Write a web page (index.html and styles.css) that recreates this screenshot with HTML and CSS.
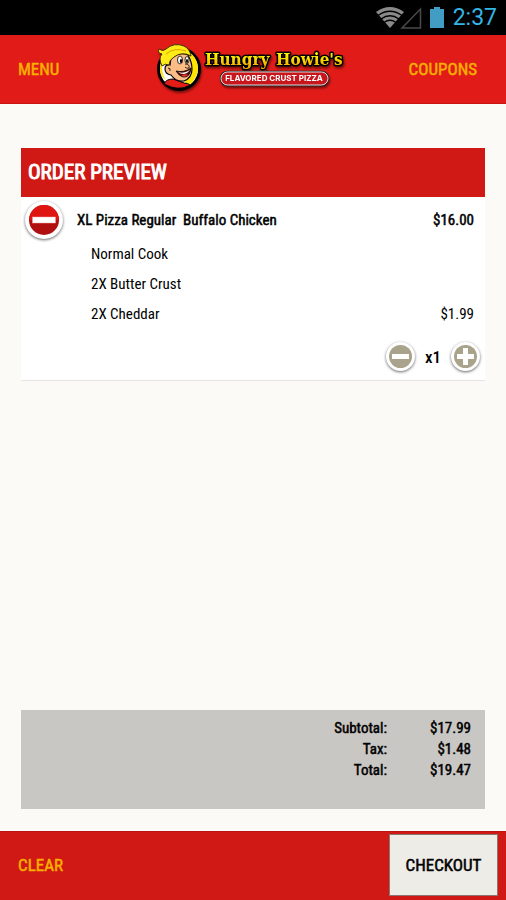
FILE: index.html
```html
<!DOCTYPE html>
<html lang="en">
<head>
    <meta charset="UTF-8">
    <meta name="viewport" content="width=device-width, initial-scale=1.0">
    <title>Order Preview</title>
    <link rel="stylesheet" href="styles.css">
</head>
<body>
    <div class="status-bar">
        <svg class="status-icons" width="72" height="24" viewBox="0 0 72 24">
            <!-- wifi -->
            <path d="M15 22 L1 6 Q15 -4 29 6 Z" fill="#8a8a8a"/>
            <g fill="none" stroke="#000" stroke-width="1.3">
                <path d="M3 9.500 Q15 1 27 9.500"/>
                <path d="M6 13 Q15 6.500 24 13"/>
                <path d="M9 16.500 Q15 12 21 16.500"/>
            </g>
            <!-- signal -->
            <path d="M27 22 L45.500 3 V22 Z" fill="none" stroke="#4a4a4a" stroke-width="1.500"/>
            <!-- battery -->
            <path d="M55 3 H59 V1 H65 V3 H69 V22 H55 Z" fill="#429dc4"/>
        </svg>
        <span class="clock">2:37</span>
    </div>

    <header class="header">
        <a href="#" class="nav-link">MENU</a>
        <svg class="logo" width="200" height="56" viewBox="-6 0 200 56" role="img" aria-label="Hungry Howie's Flavored Crust Pizza">
            <defs>
                <linearGradient id="gold" x1="0" y1="0" x2="0" y2="1">
                    <stop offset="0.3" stop-color="#fff200"/>
                    <stop offset="0.9" stop-color="#f7a800"/>
                </linearGradient>
                <filter id="shadow" x="-10%" y="-10%" width="130%" height="140%">
                    <feDropShadow dx="1" dy="2" stdDeviation="1" flood-opacity="0.5"/>
                </filter>
            </defs>
            <g filter="url(#shadow)">
                <circle cx="25" cy="28" r="20.500" fill="#fff" stroke="#000" stroke-width="3"/>
                <path d="M33 10 A19 19 0 0 1 34 44 Q43 27 33 10 Z" fill="#ffe600"/>
                <path d="M31 40 Q40 35 39 20 Q46 28 39 40 Q36 44 32 45 Z" fill="#ffe600"/>
                <path d="M12 13 Q4 27 12 39 Q6 35 6 28 Q6 19 12 13 Z" fill="#ffe600"/>
                <!-- shirt -->
                <path d="M10 43 Q12 38 19 38 L30 42 Q34 42 36 44 Q25 51 10 43 Z" fill="#e31b17" stroke="#000" stroke-width="1"/>
                <!-- face -->
                <path d="M17 17 Q26 10 34 14 Q38 21 38 28 Q38 37 30 40 Q22 41 17 34 Q11 33 11 28 Q11 23 16 24 Z" fill="#fbbd85" stroke="#000" stroke-width="1.200"/>
                <path d="M14 27 Q17 27 16 30" fill="none" stroke="#000" stroke-width="0.800"/>
                <!-- hair -->
                <path d="M8 25 Q4 17 8 13 Q3 12 5 8 Q9 11 12 8 Q20 1 30 5 Q36 8 37 15 Q28 10 20 16 Q15 19 15 24 Q11 22 8 25 Z" fill="#ffec19" stroke="#3b3000" stroke-width="1"/>
                <path d="M12 13 Q20 6 32 10" fill="none" stroke="#d6a400" stroke-width="1"/>
                <!-- eyes, nose and mouth -->
                <ellipse cx="26" cy="19" rx="2.500" ry="4" fill="#fff" stroke="#000" stroke-width="0.800"/>
                <ellipse cx="33" cy="19" rx="2" ry="3.500" fill="#fff" stroke="#000" stroke-width="0.800"/>
                <ellipse cx="27" cy="20" rx="1.200" ry="2" fill="#000"/>
                <ellipse cx="33" cy="20" rx="1" ry="2" fill="#000"/>
                <path d="M31 23 Q36 23 35 27 Q33 28 31 26" fill="#fbbd85" stroke="#000" stroke-width="0.800"/>
                <path d="M22 30 Q30 32 37 27 Q36 37 29 36 Q25 35 22 30 Z" fill="#5c0b08" stroke="#000" stroke-width="0.800"/>
                <path d="M24 31 Q30 33 36 29 Q34 32 30 33 Q26 33 24 31 Z" fill="#fff"/>
                <path d="M27 35 Q30 32 34 34 Q31 37 27 35 Z" fill="#e2392f"/>
            </g>
            <g filter="url(#shadow)">
                <text class="logo-name" x="51" y="24">Hungry</text>
                <text class="logo-name" x="122" y="24">Howie's</text>
                <rect x="67" y="31" width="107" height="13" rx="6.500" fill="#c9161c" stroke="#222" stroke-width="2.500"/>
                <rect x="67" y="31" width="107" height="13" rx="6.500" fill="#c9161c" stroke="#ddd" stroke-width="1"/>
                <text class="logo-tag" x="120" y="40" text-anchor="middle">FLAVORED CRUST PIZZA</text>
            </g>
        </svg>
        <a href="#" class="nav-link">COUPONS</a>
    </header>

    <main class="content">
        <section class="order">
            <h1>ORDER PREVIEW</h1>
            <div class="item">
                <button class="round-btn remove" type="button" aria-label="Remove item">
                    <svg width="30" height="30" viewBox="0 0 30 30">
                        <circle cx="15" cy="15" r="15" fill="#b01010"/>
                        <path d="M0 15 A15 15 0 0 1 30 15 Z" fill="#df1512"/>
                        <rect x="3.500" y="12" width="23" height="6" fill="#fff" stroke="#e9a9a5" stroke-width="0.500"/>
                    </svg>
                </button>
                <div class="details">
                    <div class="row item-name">
                        <span>XL Pizza Regular&nbsp; Buffalo Chicken</span>
                        <span>$16.00</span>
                    </div>
                    <div class="row option"><span>Normal Cook</span></div>
                    <div class="row option"><span>2X Butter Crust</span></div>
                    <div class="row option">
                        <span>2X Cheddar</span>
                        <span>$1.99</span>
                    </div>
                </div>
            </div>
            <div class="quantity">
                <button class="round-btn" type="button" aria-label="Decrease quantity">
                    <svg width="23" height="23" viewBox="0 0 23 23">
                        <circle cx="11.500" cy="11.500" r="11.500" fill="#aaa38b"/>
                        <rect x="3" y="9" width="17" height="5" fill="#fff"/>
                    </svg>
                </button>
                <span class="count">x1</span>
                <button class="round-btn" type="button" aria-label="Increase quantity">
                    <svg width="23" height="23" viewBox="0 0 23 23">
                        <circle cx="11.500" cy="11.500" r="11.500" fill="#aaa38b"/>
                        <path d="M9 3 H14 V9 H20 V14 H14 V20 H9 V14 H3 V9 H9 Z" fill="#fff"/>
                    </svg>
                </button>
            </div>
        </section>

        <section class="totals">
            <table>
                <tr><th scope="row">Subtotal:</th><td>$17.99</td></tr>
                <tr><th scope="row">Tax:</th><td>$1.48</td></tr>
                <tr><th scope="row">Total:</th><td>$19.47</td></tr>
            </table>
        </section>
    </main>

    <footer class="footer">
        <button class="clear-btn" type="button">CLEAR</button>
        <button class="checkout-btn" type="button">CHECKOUT</button>
    </footer>
</body>
</html>
```
FILE: styles.css
```css
* {
    box-sizing: border-box;
}
body {
    font-family: "Roboto Condensed", "Liberation Sans Narrow", Roboto, sans-serif;
    font-size: 15px;
    color: #000;
    background-color: #fbfaf6;
    margin: 0;
    min-height: 100vh;
    display: flex;
    flex-direction: column;
}
button {
    font-family: inherit;
    color: inherit;
    border: none;
    padding: 0;
    cursor: pointer;
}
/* thickened regular weight, narrower than the real bold */
h1,
.nav-link,
.item-name,
.totals,
.footer button {
    -webkit-text-stroke: 0.5px currentColor;
}
.status-bar {
    background-color: #000;
    height: 35px;
    padding: 0 9px;
    display: flex;
    justify-content: flex-end;
    align-items: center;
    gap: 6px;
}
.clock {
    font-family: Roboto, sans-serif;
    font-size: 23px;
    line-height: 36px;
    color: #33b5e5;
}
.header {
    background-color: #e11b17;
    border-bottom: 1px solid #c81410;
    height: 69px;
    padding: 0 29px 0 18px;
    display: grid;
    grid-template-columns: 1fr auto 1fr;
    align-items: center;
}
.nav-link {
    color: #f8b000;
    font-size: 17px;
    text-decoration: none;
}
.nav-link:last-child {
    text-align: right;
}
.logo {
    display: block;
}
.logo-name {
    font-family: "DejaVu Serif Condensed", "DejaVu Serif", serif;
    font-size: 17px;
    font-weight: bold;
    fill: url(#gold);
    stroke: #000;
    stroke-width: 3px;
    stroke-linejoin: round;
    paint-order: stroke;
}
.logo-tag {
    font-family: Inter, "Open Sans", sans-serif;
    font-size: 8px;
    font-weight: bold;
    fill: #fff;
}
.content {
    flex: 1;
    padding: 44px 21px 22px;
    display: flex;
    flex-direction: column;
    justify-content: space-between;
}
.order {
    background-color: #fff;
    border-bottom: 1px solid #e4e4e0;
}
h1 {
    background-color: #d01814;
    color: #fff;
    font-size: 21px;
    font-weight: normal;
    line-height: 49px;
    margin: 0;
    padding: 0 7px;
    -webkit-text-stroke-width: 1px;
}
.item {
    display: flex;
    align-items: flex-start;
    gap: 14px;
    padding: 4px 11px 0 4px;
}
.round-btn {
    background-color: #fff;
    border-radius: 50%;
    box-shadow: 0 1px 3px rgba(0, 0, 0, 0.6);
    width: 29px;
    height: 29px;
    display: flex;
    justify-content: center;
    align-items: center;
}
.remove {
    width: 38px;
    height: 38px;
}
.details {
    flex: 1;
}
.row {
    display: flex;
    justify-content: space-between;
    line-height: 30px;
}
.item-name {
    line-height: 38px;
}
.option span:first-child {
    padding-left: 14px;
}
.quantity {
    display: flex;
    justify-content: flex-end;
    align-items: center;
    gap: 10px;
    padding: 13px 5px 9px;
}
.count {
    font-size: 17px;
    font-weight: 500;
}
.totals {
    background-color: #c9c7c3;
    padding: 8px 14px 28px;
}
.totals table {
    border-collapse: collapse;
    margin-left: auto;
    text-align: right;
}
.totals th,
.totals td {
    font-weight: normal;
    line-height: 21px;
    padding: 0;
}
.totals td {
    width: 84px;
}
.footer {
    background-color: #d01814;
    border-top: 1px solid #b81410;
    padding: 2px 8px 4px 18px;
    display: flex;
    justify-content: space-between;
    align-items: center;
}
.clear-btn {
    background: none;
    color: #f8b000;
    font-size: 17px;
}
.checkout-btn {
    background-color: #edece7;
    border: 1px solid #8c7470;
    width: 109px;
    height: 62px;
    font-size: 17px;
}
```
